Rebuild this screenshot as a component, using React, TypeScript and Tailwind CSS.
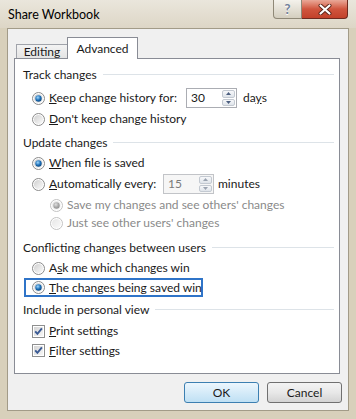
import React from "react";

function Radio({ gid, checked = false, disabled = false }: { gid: string; checked?: boolean; disabled?: boolean }) {
  return (
    <svg width="13" height="13" viewBox="0 0 13 13" className="shrink-0">
      <defs>
        <linearGradient id={gid + "b"} x1="0" y1="0" x2="1" y2="1">
          <stop offset="0" stopColor={disabled ? "#e6e6e6" : "#cfcfcf"} />
          <stop offset="1" stopColor={disabled ? "#fafafa" : "#fbfbfb"} />
        </linearGradient>
        <radialGradient id={gid + "d"} cx="0.4" cy="0.35" r="0.75">
          <stop offset="0" stopColor={disabled ? "#e0e0e0" : "#9fd8ff"} />
          <stop offset="0.55" stopColor={disabled ? "#a8a8a8" : "#1b6db5"} />
          <stop offset="1" stopColor={disabled ? "#8c8c8c" : "#0b3e70"} />
        </radialGradient>
      </defs>
      <circle cx="6.5" cy="6.5" r="6" fill="#fff" stroke={disabled ? "#c2c2c2" : "#8a8a8a"} />
      <circle cx="6.5" cy="6.5" r="4.6" fill={`url(#${gid}b)`} />
      {checked && <circle cx="6.5" cy="6.5" r="3.2" fill={`url(#${gid}d)`} />}
    </svg>
  );
}

function Check({ gid }: { gid: string }) {
  return (
    <svg width="13" height="13" viewBox="0 0 13 13" className="shrink-0">
      <defs>
        <linearGradient id={gid} x1="0" y1="0" x2="1" y2="1">
          <stop offset="0" stopColor="#d4d4d4" />
          <stop offset="1" stopColor="#f7f7f7" />
        </linearGradient>
      </defs>
      <rect x="0.5" y="0.5" width="12" height="12" fill="#fff" stroke="#8e8f8f" />
      <rect x="2" y="2" width="9" height="9" fill={`url(#${gid})`} />
      <path d="M3.2 6.4 L5.4 8.9 L9.9 3.4" fill="none" stroke="#3a5a94" strokeWidth="1.9" />
    </svg>
  );
}

function Spinner({ value, disabled = false }: { value: string; disabled?: boolean }) {
  const arrow = disabled ? "#9aa3b0" : "#4c5f80";
  return (
    <div
      className={`flex h-[20px] w-[51px] border ${
        disabled ? "border-[#c2c4c8] bg-[#f6f6f6] text-[#7a7a7a]" : "border-[#abadb3] bg-white"
      }`}
    >
      <span className="flex-1 pl-[4px] leading-[18px]">{value}</span>
      <div className="flex flex-col w-[13px] my-[1px] mr-[1px] gap-px">
        <div className="flex-1 flex items-center justify-center border border-[#c3c9d1] rounded-[2px] bg-gradient-to-b from-[#f7f8fa] to-[#dfe4ea]">
          <svg width="5" height="3" viewBox="0 0 5 3">
            <path d="M0 3 L2.5 0 L5 3 Z" fill={arrow} />
          </svg>
        </div>
        <div className="flex-1 flex items-center justify-center border border-[#c3c9d1] rounded-[2px] bg-gradient-to-b from-[#f7f8fa] to-[#dfe4ea]">
          <svg width="5" height="3" viewBox="0 0 5 3">
            <path d="M0 0 L5 0 L2.5 3 Z" fill={arrow} />
          </svg>
        </div>
      </div>
    </div>
  );
}

function Header({ text, className = "" }: { text: string; className?: string }) {
  return (
    <div className={`flex items-center h-[20px] pl-[8px] pr-[5px] ${className}`}>
      <span className="leading-[14px]">{text}</span>
      <div className="flex-1 h-px bg-[#dde3e8] ml-[6px] -mt-[1px]" />
    </div>
  );
}

export default function App() {
  return (
    <div className="w-[356px] h-[419px] overflow-hidden bg-[#d8d0bb] font-['Lato',sans-serif] text-[12px] text-[#1a1a1a] whitespace-nowrap flex flex-col">
      {/* title bar */}
      <div className="h-[28px] flex items-start bg-gradient-to-b from-[#eae6dc] to-[#ddd6c6] pr-[8px]">
        <span className="self-center pl-[8px] pt-[2px] text-[12.5px] text-black">Share Workbook</span>
        <div className="ml-auto flex">
          <div className="w-[29px] h-[19px] flex items-center justify-center border border-t-0 border-[#8f8877] rounded-bl-[4px] bg-gradient-to-b from-[#f4f2ec] to-[#d4cebf]">
            <span className="text-[13px] font-bold leading-none text-[#70809a] [text-shadow:0_1px_0_#fff]">?</span>
          </div>
          <div className="w-[46px] h-[19px] flex items-center justify-center border border-t-0 border-l-0 border-[#6e2a1f] rounded-br-[4px] bg-gradient-to-b from-[#e9a898] via-[#d0553e] to-[#c2412a]">
            <svg width="14" height="11" viewBox="0 0 14 11">
              <path d="M2.5 1.5 L11.5 9.5 M11.5 1.5 L2.5 9.5" stroke="#5b2419" strokeWidth="4" strokeLinecap="round" />
              <path d="M2.5 1.5 L11.5 9.5 M11.5 1.5 L2.5 9.5" stroke="#fff" strokeWidth="2.2" strokeLinecap="round" />
            </svg>
          </div>
        </div>
      </div>

      {/* client area */}
      <div className="mx-[7px] h-[383px] border border-[#a29b88] bg-[#f0f0f0] flex flex-col">
        <div className="ml-[6px] mt-[8px] flex items-end h-[21px] pl-[2px]">
          <div className="h-[14px] w-[52px] flex items-center justify-center border border-b-0 border-[#a0a3aa] bg-gradient-to-b from-[#f3f3f3] to-[#e4e4e4]">
            <span className="leading-[12px] pt-[1px]">Editing</span>
          </div>
          <div className="relative z-10 -mb-px -ml-px h-[22px] w-[71px] flex items-start justify-center pt-[4px] border border-b-0 border-[#898c95] bg-white">
            <span className="leading-[14px]">Advanced</span>
          </div>
        </div>

        <div className="ml-[6px] w-[326px] h-[316px] border border-[#898c95] bg-white flex flex-col">
          <Header text="Track changes" className="mt-[6px]" />
          <div className="flex items-center h-[20px] mt-[3px] pl-[17px]">
            <Radio gid="r1" checked />
            <span className="w-[137px] ml-[4px] leading-[14px]">
              <u>K</u>eep change history for:
            </span>
            <Spinner value="30" />
            <span className="ml-[6px] leading-[14px]">
              da<u>y</u>s
            </span>
          </div>
          <div className="flex items-center h-[20px] mt-[1px] pl-[17px]">
            <Radio gid="r2" />
            <span className="ml-[4px] leading-[14px]">
              <u>D</u>on't keep change history
            </span>
          </div>

          <Header text="Update changes" className="mt-[4px]" />
          <div className="flex items-center h-[20px] pl-[17px]">
            <Radio gid="r3" checked />
            <span className="ml-[4px] leading-[14px]">
              <u>W</u>hen file is saved
            </span>
          </div>
          <div className="flex items-center h-[20px] mt-[1px] pl-[17px]">
            <Radio gid="r4" />
            <span className="w-[114px] ml-[4px] leading-[14px]">
              <u>A</u>utomatically every:
            </span>
            <Spinner value="15" disabled />
            <span className="ml-[4px] leading-[14px]">minutes</span>
          </div>
          <div className="flex items-center h-[18px] mt-[2px] pl-[35px] text-[#8a8a8a]">
            <Radio gid="r5" checked disabled />
            <span className="ml-[4px] leading-[14px]">Save my changes and see others' changes</span>
          </div>
          <div className="flex items-center h-[18px] pl-[35px] text-[#8a8a8a]">
            <Radio gid="r6" disabled />
            <span className="ml-[4px] leading-[14px]">Just see other users' changes</span>
          </div>

          <Header text="Conflicting changes between users" className="mt-[6px]" />
          <div className="flex items-center h-[20px] pl-[17px]">
            <Radio gid="r7" />
            <span className="ml-[4px] leading-[14px]">
              A<u>s</u>k me which changes win
            </span>
          </div>
          <div className="flex h-[19px] pl-[9px]">
            <div className="w-[179px] h-[19px] flex items-center pl-[6px] border-2 border-[#2f74c8]">
              <Radio gid="r8" checked />
              <span className="ml-[4px] leading-[14px]">
                <u>T</u>he changes being saved win
              </span>
            </div>
          </div>

          <Header text="Include in personal view" className="mt-[3px]" />
          <div className="flex items-center h-[20px] mt-[1px] pl-[17px]">
            <Check gid="c1" />
            <span className="ml-[4px] leading-[14px]">
              <u>P</u>rint settings
            </span>
          </div>
          <div className="flex items-center h-[19px] pl-[17px]">
            <Check gid="c2" />
            <span className="ml-[4px] leading-[14px]">
              <u>F</u>ilter settings
            </span>
          </div>
        </div>

        <div className="mt-[8px] flex justify-end gap-[8px] pr-[6px]">
          <button className="w-[75px] h-[21px] rounded-[3px] border border-[#3c7fb1] bg-gradient-to-b from-[#ecf6fd] to-[#bfe0f4] leading-[19px]">
            OK
          </button>
          <button className="w-[75px] h-[21px] rounded-[3px] border border-[#707070] bg-gradient-to-b from-[#f3f3f3] via-[#e8e8e8] to-[#d3d3d3] leading-[19px]">
            Cancel
          </button>
        </div>
      </div>
    </div>
  );
}
